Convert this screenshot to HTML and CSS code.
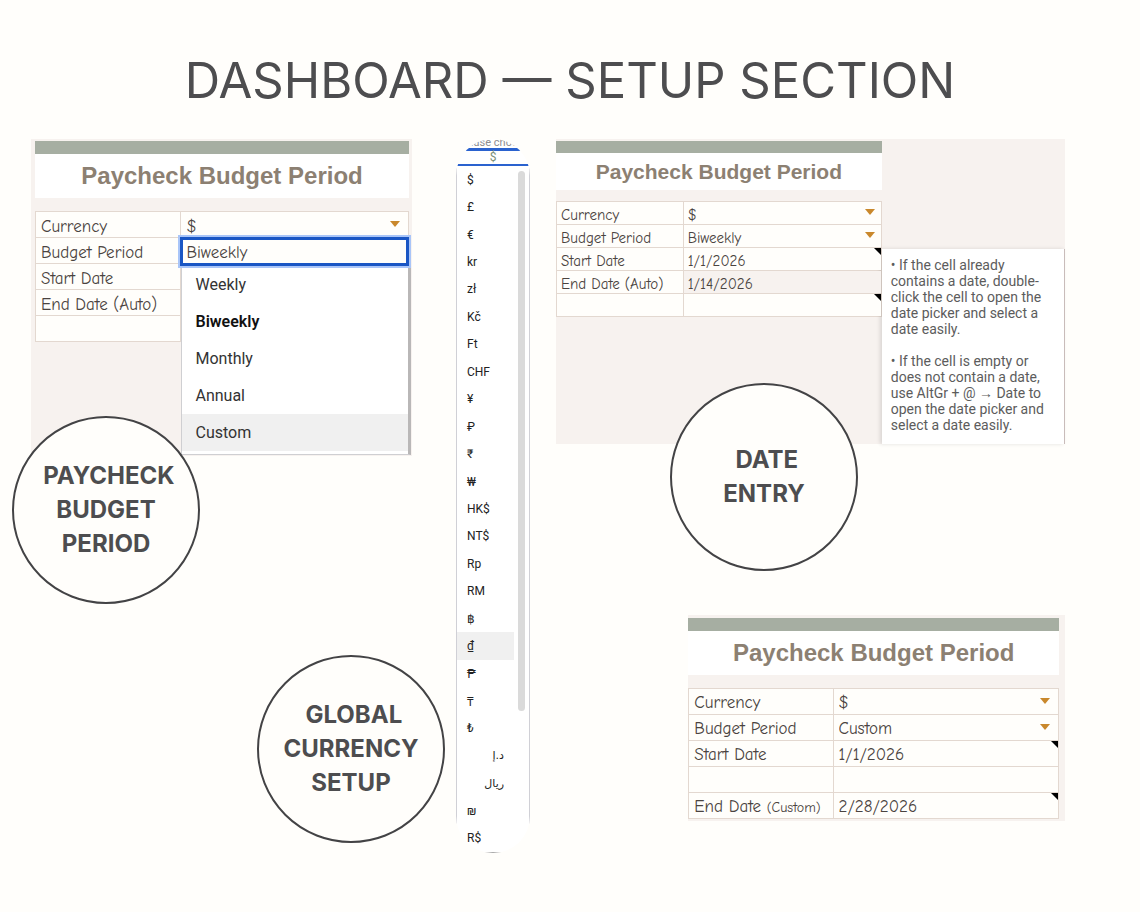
FILE: index.html
```
<!DOCTYPE html>
<html lang="en">
<head>
  <meta charset="UTF-8">
  <title>Dashboard — Setup Section</title>
  <link rel="stylesheet" href="styles.css">
</head>
<body>
  <h1>DASHBOARD — SETUP SECTION</h1>

  <main class="board">
    <!-- Budget period with open dropdown -->
    <section class="panel panel-period">
      <div class="band"></div>
      <h2>Paycheck Budget Period</h2>
      <table class="sheet">
        <tr>
          <th><label for="cur1">Currency</label></th>
          <td class="has-caret"><select id="cur1"><option>$</option></select></td>
        </tr>
        <tr>
          <th><label for="period1">Budget Period</label></th>
          <td class="active">
            <input type="text" id="period1" value="Biweekly">
            <ul class="menu">
              <li><button type="button">Weekly</button></li>
              <li><button type="button" class="chosen">Biweekly</button></li>
              <li><button type="button">Monthly</button></li>
              <li><button type="button">Annual</button></li>
              <li><button type="button" class="hover">Custom</button></li>
            </ul>
          </td>
        </tr>
        <tr><th>Start Date</th><td></td></tr>
        <tr><th>End Date (Auto)</th><td></td></tr>
        <tr><th></th><td></td></tr>
      </table>
      <div class="badge badge-period"><span>&nbsp;PAYCHECK<br>BUDGET<br>PERIOD</span></div>
    </section>

    <!-- Currency list -->
    <section class="currency">
      <div class="strip">
        <div class="strip-hint">ease choo</div>
        <div class="strip-value">$</div>
        <div class="strip-body">
          <ul class="currency-list">
            <li><button type="button">$</button></li>
            <li><button type="button">£</button></li>
            <li><button type="button">€</button></li>
            <li><button type="button">kr</button></li>
            <li><button type="button">zł</button></li>
            <li><button type="button">Kč</button></li>
            <li><button type="button">Ft</button></li>
            <li><button type="button">CHF</button></li>
            <li><button type="button">¥</button></li>
            <li><button type="button">₽</button></li>
            <li><button type="button">₹</button></li>
            <li><button type="button">₩</button></li>
            <li><button type="button">HK$</button></li>
            <li><button type="button">NT$</button></li>
            <li><button type="button">Rp</button></li>
            <li><button type="button">RM</button></li>
            <li><button type="button">฿</button></li>
            <li><button type="button" class="hover">₫</button></li>
            <li><button type="button">₱</button></li>
            <li><button type="button">₸</button></li>
            <li><button type="button">₺</button></li>
            <li><button type="button" class="rtl" dir="rtl">د.إ</button></li>
            <li><button type="button" class="rtl" dir="rtl">ریال</button></li>
            <li><button type="button">₪</button></li>
            <li><button type="button">R$</button></li>
          </ul>
          <div class="scrollbar"></div>
        </div>
      </div>
      <div class="badge badge-currency"><span>&nbsp;GLOBAL<br>CURRENCY<br>SETUP</span></div>
    </section>

    <div class="side">
      <!-- Date entry with cell note -->
      <section class="panel panel-date">
        <div class="panel-main">
          <div class="band"></div>
          <h2>Paycheck Budget Period</h2>
          <table class="sheet">
            <tr>
              <th><label for="cur2">Currency</label></th>
              <td class="has-caret"><select id="cur2"><option>$</option></select></td>
            </tr>
            <tr>
              <th><label for="period2">Budget Period</label></th>
              <td class="has-caret"><select id="period2"><option>Biweekly</option></select></td>
            </tr>
            <tr>
              <th><label for="start2">Start Date</label></th>
              <td class="has-note"><input type="text" id="start2" value="1/1/2026"></td>
            </tr>
            <tr><th>End Date (Auto)</th><td class="auto">1/14/2026</td></tr>
            <tr><th></th><td class="has-note"></td></tr>
          </table>
        </div>
        <aside class="note">
          <p>• If the cell already contains a date, double-click the cell to open the date picker and select a date easily.</p>
          <p>• If the cell is empty or does not contain a date, use AltGr + @ → Date to open the date picker and select a date easily.</p>
        </aside>
        <div class="badge badge-date"><span>&nbsp;DATE<br>ENTRY</span></div>
      </section>

      <!-- Custom period -->
      <section class="panel panel-custom">
        <div class="band"></div>
        <h2>Paycheck Budget Period</h2>
        <table class="sheet">
          <tr>
            <th><label for="cur3">Currency</label></th>
            <td class="has-caret"><select id="cur3"><option>$</option></select></td>
          </tr>
          <tr>
            <th><label for="period3">Budget Period</label></th>
            <td class="has-caret"><select id="period3"><option>Custom</option></select></td>
          </tr>
          <tr>
            <th><label for="start3">Start Date</label></th>
            <td class="has-note"><input type="text" id="start3" value="1/1/2026"></td>
          </tr>
          <tr><th></th><td></td></tr>
          <tr>
            <th><label for="end3">End Date <small>(Custom)</small></label></th>
            <td class="has-note"><input type="text" id="end3" value="2/28/2026"></td>
          </tr>
        </table>
      </section>
    </div>
  </main>
</body>
</html>
```
FILE: styles.css
```
* {
  box-sizing: border-box;
}
body {
  margin: 0;
  background-color: #fffefb;
  font-family: Inter, sans-serif;
  color: #4d4d4f;
}
h1 {
  margin: 0;
  padding-top: 52px;
  font-size: 49px;
  font-weight: 400;
  line-height: 58px;
  text-align: center;
}
.board {
  display: grid;
  grid-template-columns: 399fr 74px 509fr;
  column-gap: 26px;
  padding: 29px 75px 58px 31px;
}

/* Spreadsheet panels */
.panel {
  position: relative;
  background-color: #f7f2ef;
}
.band {
  height: 13px;
  background-color: #a6aea2;
}
h2 {
  margin: 0 0 13px;
  background-color: #fff;
  color: #8c8072;
  font: bold 24px/44px "Liberation Sans", Arial, sans-serif;
  text-align: center;
}
.sheet {
  width: 100%;
  table-layout: fixed;
  border-collapse: collapse;
  font: 17px/20px "Comic Sans MS", "Comic Neue", Lato, sans-serif;
  color: #4a4340;
}
.sheet th,
.sheet td {
  position: relative;
  height: 26px;
  padding: 4px 5px 0;
  border: 1px solid #e3d8d0;
  background-color: #fffefb;
  font-weight: normal;
  text-align: left;
  white-space: nowrap;
}
.sheet th {
  width: 39%;
}
.sheet small {
  font-size: 14px;
}
.sheet select,
.sheet input {
  display: block;
  width: 100%;
  height: 20px;
  margin: 0;
  padding: 0;
  border: none;
  outline: none;
  background: none;
  appearance: none;
  font: inherit;
  color: inherit;
}
.has-caret::after {
  content: "";
  position: absolute;
  top: 9px;
  right: 8px;
  border: 5px solid transparent;
  border-top: 6px solid #c9882c;
  border-bottom: none;
  pointer-events: none;
}
.has-note::after {
  content: "";
  position: absolute;
  top: 0;
  right: 0;
  border-top: 7px solid #000;
  border-left: 7px solid transparent;
}
.sheet .auto {
  background-color: #f7f2ef;
}

.panel-period {
  align-self: start;
  min-height: 317px;
  margin-right: 18px;
  padding: 2px 3px 0 4px;
}
.sheet .active {
  z-index: 1;
}
.active::before {
  content: "";
  position: absolute;
  top: -1px;
  right: -1px;
  bottom: -3px;
  left: -1px;
  z-index: 1;
  border: 3px solid #1a56c4;
  box-shadow: 0 0 0 2px #a9c5f8;
  pointer-events: none;
}
.menu {
  position: absolute;
  top: 28px;
  left: 0;
  right: -3px;
  margin: 0;
  padding: 0 0 3px;
  list-style: none;
  background-color: #fff;
  border: 1px solid #cfcfd2;
  border-width: 0 3px 1px 1px;
  border-right-color: #b9b7b7;
}
.menu button {
  display: block;
  width: 100%;
  height: 37px;
  padding: 0 13px;
  border: none;
  background: none;
  font: 16px Roboto, sans-serif;
  color: #333;
  text-align: left;
}
.menu .chosen {
  font-weight: 600;
  color: #111;
}
.menu .hover,
.currency-list .hover {
  background-color: #f0f0f0;
}

/* Currency dropdown */
.currency {
  position: relative;
  display: flex;
  min-height: 714px;
}
.strip {
  display: flex;
  flex-direction: column;
  width: 100%;
  overflow: hidden;
  border-radius: 37px;
  background-color: #fff;
  font-family: Roboto, "Noto Sans", "DejaVu Sans", sans-serif;
  text-align: center;
}
.strip-hint {
  height: 12px;
  border-bottom: 3px solid #2a62cf;
  font-size: 11px;
  line-height: 7px;
  color: #8d8d90;
}
.strip-value {
  height: 15px;
  border-bottom: 2px solid #2a62cf;
  font-size: 12px;
  line-height: 13px;
  color: #7b9078;
}
.strip-body {
  display: flex;
  flex: 1;
  gap: 4px;
  padding-right: 4px;
  border: 1px solid #d0d0d6;
  border-top: none;
  border-bottom-color: #a8a8a8;
}
.currency-list {
  display: flex;
  flex: 1;
  flex-direction: column;
  margin: 0;
  padding: 0;
  list-style: none;
}
.currency-list li {
  display: flex;
  flex: 1;
}
.currency-list button {
  width: 100%;
  padding: 0 10px;
  border: none;
  background: none;
  font: 12px Roboto, "Noto Sans", "DejaVu Sans", sans-serif;
  color: #222;
  text-align: left;
}
.currency-list .rtl {
  font: 11px "DejaVu Sans", sans-serif;
  text-align: right;
}
.scrollbar {
  width: 7px;
  height: 540px;
  margin-top: 5px;
  border-radius: 4px;
  background-color: #dadada;
}

/* Right column */
.side {
  display: flex;
  flex-direction: column;
  justify-content: space-between;
  padding-bottom: 32px;
}
.panel-date {
  display: flex;
  min-height: 305px;
}
.panel-main {
  width: 64%;
  padding-top: 2px;
}
.panel-date .band {
  height: 12px;
}
.panel-date h2 {
  margin-bottom: 11px;
  font-size: 21px;
  line-height: 37px;
}
.panel-date .sheet {
  font-size: 15px;
  line-height: 18px;
}
.panel-date .sheet th,
.panel-date .sheet td {
  height: 23px;
  padding: 3px 4px 0;
}
.panel-date .sheet select,
.panel-date .sheet input {
  height: 18px;
}
.panel-date .has-caret::after {
  top: 7px;
  right: 6px;
}
.note {
  flex: 1;
  align-self: flex-end;
  padding: 8px 16px 11px 9px;
  border-right: 1px solid #c9bcba;
  background-color: #fff;
  box-shadow: -2px 0 4px rgba(0, 0, 0, 0.12);
  font: 14px/16px Roboto, sans-serif;
  color: #5c5c5c;
}
.note p {
  margin: 0;
}
.note p + p {
  margin-top: 16px;
}
.panel-custom {
  align-self: flex-end;
  width: 74%;
  padding: 3px 6px 2px 0;
}
.panel-custom .sheet th,
.panel-custom .sheet td {
  padding-top: 3px;
}

/* Round captions */
.badge {
  position: absolute;
  z-index: 2;
  display: flex;
  align-items: center;
  justify-content: center;
  width: 188px;
  height: 188px;
  border: 2px solid #434345;
  border-radius: 50%;
  background-color: #fffefb;
  font-size: 24px;
  font-weight: 700;
  line-height: 34px;
  text-align: center;
}
.badge-period {
  top: 277px;
  left: -19px;
}
.badge-currency {
  right: 85px;
  bottom: 10px;
}
.badge-date {
  top: 244px;
  left: 114px;
}
```
